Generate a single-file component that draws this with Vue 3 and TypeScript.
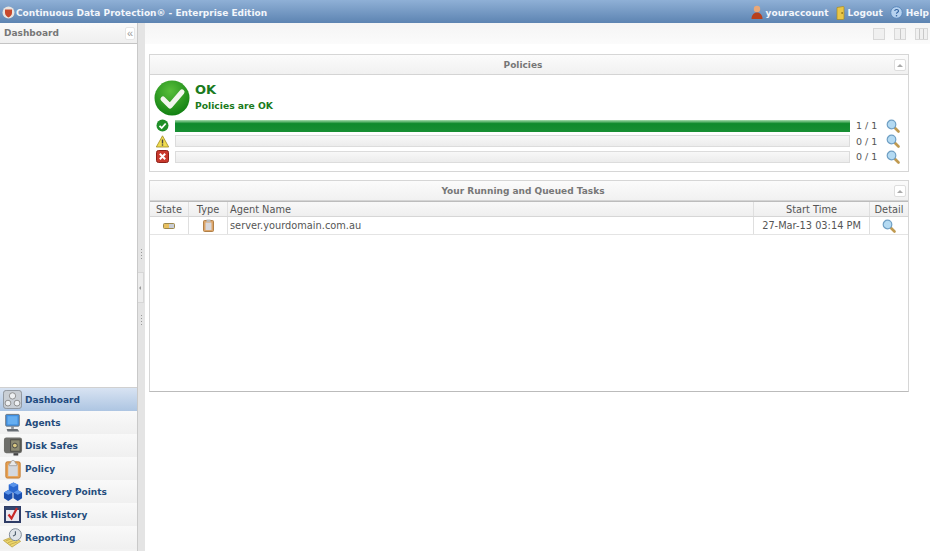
<script setup lang="ts">
interface NavItem {
  label: string
  icon: string
}

const navItems: NavItem[] = [
  { label: 'Dashboard', icon: 'dashboard' },
  { label: 'Agents', icon: 'agents' },
  { label: 'Disk Safes', icon: 'safe' },
  { label: 'Policy', icon: 'policy' },
  { label: 'Recovery Points', icon: 'recovery' },
  { label: 'Task History', icon: 'history' },
  { label: 'Reporting', icon: 'reporting' }
]

const policyRows = [
  { icon: 'ok', pct: 100, count: '1 / 1' },
  { icon: 'warn', pct: 0, count: '0 / 1' },
  { icon: 'err', pct: 0, count: '0 / 1' }
]
</script>

<template>
  <div class="page">
    <header class="topbar">
      <div class="brand">
        <svg class="brandIcon" width="13" height="13" viewBox="0 0 13 13">
          <circle cx="6.5" cy="6.5" r="6" fill="#e8e4e0" />
          <path d="M3 3.5h7V7c0 2-2 3.5-3.5 4.5C5 10.5 3 9 3 7z" fill="#c8482c" />
        </svg>
        Continuous Data Protection® - Enterprise Edition
      </div>
      <div class="userLinks">
        <span class="userLink">
          <svg width="12" height="15" viewBox="0 0 12 15">
            <circle cx="6" cy="4" r="3.2" fill="#eaa878" />
            <path d="M.5 14c0-4 2.5-6.5 5.5-6.5s5.500 2.500 5.500 6.500z" fill="#b8401c" />
          </svg>
          youraccount
        </span>
        <span class="userLink">
          <svg width="9" height="14" viewBox="0 0 9 14">
            <path d="M1 1.500L7 .5c1 0 1 .5 1 1v11c0 .5-.5 1-1 1H1z" fill="#e8c648" stroke="#a88a20" stroke-width=".7" />
            <rect x="5.5" y="6" width="1.2" height="2" fill="#8a6a10" />
          </svg>
          Logout
        </span>
        <span class="userLink">
          <svg width="13" height="13" viewBox="0 0 13 13">
            <circle cx="6.5" cy="6.5" r="5.8" fill="#b6d2f0" stroke="#5a88bc" />
            <path d="M4.7 5c.2-2 3.800-2 3.800 0 0 1.300-2 1.300-2 2.800" fill="none" stroke="#2f62a0" stroke-width="1.100" />
            <circle cx="6.5" cy="9.8" r=".8" fill="#2f62a0" />
          </svg>
          Help
        </span>
      </div>
    </header>

    <div class="body">
      <aside class="sidebar">
        <div class="sideHead">
          <span>Dashboard</span>
          <button class="collapse">«</button>
        </div>
        <div class="sideContent"></div>
        <nav class="nav">
          <a
            v-for="(item, i) in navItems"
            :key="item.label"
            class="navItem"
            :class="{ navActive: i === 0 }"
          >
            <span class="navIcon">
              <svg v-if="item.icon === 'dashboard'" width="19" height="19" viewBox="0 0 21 21">
                <rect x=".5" y=".5" width="20" height="20" rx="3" fill="#c9ced4" stroke="#8a8f96" />
                <circle cx="10.5" cy="6.5" r="3.5" fill="#eef0f2" stroke="#888" />
                <circle cx="5.5" cy="14.5" r="3.2" fill="#eef0f2" stroke="#888" />
                <circle cx="15.5" cy="14.5" r="3.2" fill="#eef0f2" stroke="#888" />
              </svg>
              <svg v-else-if="item.icon === 'agents'" width="19" height="20" viewBox="0 0 21 21">
                <rect x="3" y="1" width="15" height="13" rx="1" fill="#3f8fe0" stroke="#6a7078" />
                <rect x="5" y="3" width="11" height="9" fill="#66aef0" />
                <path d="M9 14h3v3H9z" fill="#8a9098" />
                <path d="M4 17h12l2 3H5z" fill="#676d74" />
              </svg>
              <svg v-else-if="item.icon === 'safe'" width="20" height="20" viewBox="0 0 21 21">
                <rect x="1" y="1.5" width="19" height="16.5" rx="2.5" fill="#6e6e6a" />
                <rect x="8" y="4" width="10" height="12" fill="#8c8a72" stroke="#4a4a44" />
                <circle cx="12.5" cy="10" r="2.5" fill="#d8c880" stroke="#444" />
                <rect x="11" y="18" width="5" height="2.5" fill="#444" />
              </svg>
              <svg v-else-if="item.icon === 'policy'" width="18" height="20" viewBox="0 0 18 21">
                <rect x="1.5" y="3" width="15" height="17" rx="1.5" fill="#e8a050" stroke="#c07a30" />
                <rect x="4" y="6" width="10" height="12" fill="#d4d8de" />
                <path d="M6.5 4.500c0-4 5-4 5 0H13V7H5V4.500z" fill="#e8e8e8" stroke="#999" stroke-width=".8" />
              </svg>
              <svg v-else-if="item.icon === 'recovery'" width="20" height="20" viewBox="0 0 21 21">
                <path d="M6 3l5-2.500L16 3v6l-5 2.500L6 9z" fill="#2a68d0" />
                <path d="M1 11l4.500-2.500L10 11v6l-4.500 3L1 17z" fill="#1c50b0" />
                <path d="M11 11l4.500-2.500L20 11v6l-4.500 3L11 17z" fill="#1c50b0" />
                <path d="M6 3l5 2.500L16 3 11 .5zM1 11l4.500 2.500L10 11 5.500 8.500zM11 11l4.500 2.500L20 11l-4.500-2.500z" fill="#5a94ea" />
              </svg>
              <svg v-else-if="item.icon === 'history'" width="17" height="17" viewBox="0 0 17 17">
                <rect x="1" y="1" width="15" height="15" fill="#e8e8f0" stroke="#2e3c66" stroke-width="2" />
                <path d="M1 1h15v3H1z" fill="#34466e" />
                <path d="M4.500 8.500l3 4L13 2" fill="none" stroke="#c82828" stroke-width="2.200" />
              </svg>
              <svg v-else width="20" height="20" viewBox="0 0 21 21">
                <path d="M.5 13l10-4 8 5-9 6z" fill="#ecd66e" stroke="#b89c3c" stroke-width=".8" />
                <path d="M3 13.500l8-3M5 15.500l8-3M7 17.500l8-3" stroke="#b89c3c" stroke-width=".7" />
                <circle cx="13" cy="7" r="6.3" fill="#dfe4ea" stroke="#7c8794" />
                <path d="M13 3.500V7l-2.500 1.500" fill="none" stroke="#456" stroke-width="1.100" />
              </svg>
            </span>
            {{ item.label }}
          </a>
        </nav>
      </aside>

      <div class="splitter">
        <span class="grip gripTop"></span>
        <span class="handle"><i></i></span>
        <span class="grip gripBottom"></span>
      </div>

      <main class="main">
        <div class="toolbar">
          <span class="layoutBtn"></span>
          <span class="layoutBtn cols2"><i></i></span>
          <span class="layoutBtn cols3"><i></i><i></i></span>
        </div>

        <section class="panel policiesPanel">
          <div class="panelHead">
            <span class="panelTitle">Policies</span>
            <button class="panelToggle"><i></i></button>
          </div>
          <div class="policies">
            <div class="status">
              <svg width="36" height="36" viewBox="0 0 36 36">
                <defs>
                  <radialGradient id="okBall" cx="45%" cy="30%" r="75%">
                    <stop offset="0" stop-color="#58bf3a" />
                    <stop offset="1" stop-color="#0d7c10" />
                  </radialGradient>
                </defs>
                <circle cx="18" cy="18" r="17.5" fill="url(#okBall)" />
                <path d="M9 19l7 7L28 12" fill="none" stroke="#f2f6ee" stroke-width="5" stroke-linecap="round" stroke-linejoin="round" />
              </svg>
              <div class="statusText">
                <div class="statusTitle">OK</div>
                <div class="statusSub">Policies are OK</div>
              </div>
            </div>
            <div v-for="row in policyRows" :key="row.icon" class="policyRow">
              <svg class="rowIcon" width="13" height="13" viewBox="0 0 13 13">
                <template v-if="row.icon === 'ok'">
                  <circle cx="6.5" cy="6.5" r="6" fill="#1f8f28" />
                  <path d="M3.5 6.8l2.2 2.2 4-4.500" fill="none" stroke="#fff" stroke-width="1.8" />
                </template>
                <template v-else-if="row.icon === 'warn'">
                  <path d="M6.5 .8L12.700 12H.3z" fill="#f0dc50" stroke="#a08a20" stroke-width=".8" />
                  <rect x="5.8" y="4.5" width="1.4" height="4" fill="#444" />
                  <rect x="5.8" y="9.3" width="1.4" height="1.4" fill="#444" />
                </template>
                <template v-else>
                  <rect x=".5" y=".5" width="12" height="12" rx="2" fill="#c8382c" stroke="#8c2018" />
                  <path d="M3.800 3.800l5.400 5.400M9.200 3.800l-5.400 5.400" stroke="#fff" stroke-width="2" />
                </template>
              </svg>
              <div class="bar">
                <div v-if="row.pct > 0" class="barFill" :style="{ width: row.pct + '%' }"></div>
              </div>
              <span class="count">{{ row.count }}</span>
              <svg class="lens" width="14" height="14" viewBox="0 0 14 14">
                <path d="M8.500 8.500l4 4" stroke="#c09a50" stroke-width="2.600" stroke-linecap="round" />
                <circle cx="5.5" cy="5.5" r="4.3" fill="#b4daf2" stroke="#6f9fc4" stroke-width="1.2" />
              </svg>
            </div>
          </div>
        </section>

        <section class="panel tasksPanel">
          <div class="panelHead">
            <span class="panelTitle">Your Running and Queued Tasks</span>
            <button class="panelToggle"><i></i></button>
          </div>
          <div class="tasks">
            <div class="taskRow taskHead">
              <span class="cState center">State</span>
              <span class="cType center">Type</span>
              <span class="cName">Agent Name</span>
              <span class="cTime center">Start Time</span>
              <span class="cDetail center">Detail</span>
            </div>
            <div class="taskRow">
              <span class="cState center">
                <svg width="12" height="6" viewBox="0 0 12 6">
                  <rect x=".5" y=".5" width="11" height="5" rx="1" fill="#e8c060" stroke="#9a8850" />
                  <rect x="6" y="1" width="5" height="4" fill="#c8ccd4" />
                </svg>
              </span>
              <span class="cType center">
                <svg width="11" height="13" viewBox="0 0 11 13">
                  <rect x=".5" y="1.5" width="10" height="11" rx="1" fill="#dca468" stroke="#b08048" />
                  <rect x="2.5" y="3.5" width="6" height="7.5" fill="#d8d8dc" />
                  <rect x="3.5" y=".5" width="4" height="2.5" fill="#bbb" />
                </svg>
              </span>
              <span class="cName">server.yourdomain.com.au</span>
              <span class="cTime center">27-Mar-13 03:14 PM</span>
              <span class="cDetail center">
                <svg width="14" height="14" viewBox="0 0 14 14">
                  <path d="M8.500 8.500l4 4" stroke="#c09a50" stroke-width="2.600" stroke-linecap="round" />
                  <circle cx="5.5" cy="5.5" r="4.3" fill="#b4daf2" stroke="#6f9fc4" stroke-width="1.2" />
                </svg>
              </span>
            </div>
          </div>
        </section>
      </main>
    </div>
  </div>
</template>

<style>
html,
body {
  margin: 0;
  background: #fff;
}
</style>

<style scoped>
.page {
  display: flex;
  flex-direction: column;
  width: 930px;
  height: 551px;
  overflow: hidden;
  font-family: "DejaVu Sans", Verdana, sans-serif;
  font-size: 10px;
  color: #333;
}

.topbar {
  display: flex;
  align-items: center;
  justify-content: space-between;
  flex: none;
  height: 23px;
  padding: 2px 1px 0 2px;
  box-sizing: border-box;
  background: linear-gradient(#8fb0d6, #5d84b2);
  color: #f2f6fb;
  font-weight: bold;
}

.brand {
  display: flex;
  align-items: center;
  gap: 1px;
  font-size: 9px;
}

.userLinks {
  display: flex;
  align-items: center;
  gap: 7px;
  font-size: 9px;
}

.userLink {
  display: flex;
  align-items: center;
  gap: 1px;
}

.userLink svg {
  margin-right: 2px;
}

.body {
  display: flex;
  flex: 1;
  min-height: 0;
}

.sidebar {
  display: flex;
  flex-direction: column;
  flex: none;
  width: 138px;
  box-sizing: border-box;
  border-right: 1px solid #c9c9c9;
}

.sideHead {
  display: flex;
  align-items: center;
  justify-content: space-between;
  flex: none;
  height: 20px;
  padding: 0 2px 0 4px;
  box-sizing: border-box;
  background: linear-gradient(#fafafa, #efefef);
  color: #777;
  font-weight: bold;
  font-size: 9px;
}

.collapse {
  width: 10px;
  height: 13px;
  padding: 0;
  border: 1px solid #e6e6e6;
  border-radius: 2px;
  background: #fff;
  color: #999;
  font-size: 11px;
  line-height: 9px;
}

.sideContent {
  flex: 1;
  border-top: 1px solid #c4c4c4;
  background: #fff;
}

.nav {
  display: flex;
  flex-direction: column;
  flex: none;
  height: 164px;
  padding-bottom: 2px;
  border-top: 1px solid #d0d0d0;
  box-sizing: border-box;
  background: #f2f2f2;
}

.navItem {
  display: flex;
  flex: none;
  height: 23px;
  align-items: center;
  gap: 2px;
  padding-left: 2px;
  background: linear-gradient(#f9f9f9, #f0f0f0);
  color: #244c7c;
  font-weight: bold;
  font-size: 9px;
}

.navActive {
  background: linear-gradient(#d8e3f2, #adc5e2);
  color: #1f4a7e;
}

.navIcon {
  display: flex;
  justify-content: center;
  flex: none;
  width: 21px;
}

.splitter {
  position: relative;
  flex: none;
  width: 7px;
  background: #e4e4e4;
}

.grip {
  position: absolute;
  left: 3px;
  width: 1px;
  height: 12px;
  background: repeating-linear-gradient(#999 0 1px, transparent 1px 3px);
}

.gripTop {
  top: 226px;
}

.gripBottom {
  top: 292px;
}

.handle {
  position: absolute;
  top: 249px;
  left: 0;
  width: 6px;
  height: 31px;
  border: 1px solid #d6d6d6;
  border-left: 0;
  background: #ececec;
  box-sizing: border-box;
}

.handle i {
  position: absolute;
  top: 13px;
  left: 1px;
  border: 2px solid transparent;
  border-right-color: #999;
  border-left: 0;
}

.main {
  display: flex;
  flex: 1;
  flex-direction: column;
  min-width: 0;
  background: #fff;
}

.toolbar {
  display: flex;
  align-items: center;
  justify-content: flex-end;
  gap: 9px;
  flex: none;
  height: 21px;
  padding-right: 2px;
  box-sizing: border-box;
  background: linear-gradient(#f5f5f5, #fbfbfb);
}

.layoutBtn {
  display: flex;
  justify-content: space-evenly;
  width: 12px;
  height: 12px;
  box-sizing: border-box;
  border: 1px solid #d8d8d8;
  background: #f0f0f0;
}

.cols3 {
  width: 13px;
}

.layoutBtn i {
  width: 1px;
  background: #c8c8c8;
}

.panel {
  display: flex;
  flex-direction: column;
  flex: none;
  width: 760px;
  margin-left: 4px;
  border: 1px solid #d6d6d6;
  box-sizing: border-box;
  background: #fff;
}

.policiesPanel {
  height: 118px;
  margin-top: 10px;
}

.tasksPanel {
  height: 212px;
  margin-top: 8px;
  border-bottom-color: #bbb;
}

.panelHead {
  position: relative;
  display: flex;
  align-items: center;
  justify-content: center;
  flex: none;
  height: 20px;
  padding-right: 12px;
  box-sizing: border-box;
  border-bottom: 1px solid #d4d4d4;
  background: linear-gradient(#fbfbfb, #f1f1f1);
}

.panelTitle {
  color: #777;
  font-weight: bold;
  font-size: 9px;
}

.panelToggle {
  position: absolute;
  top: 4px;
  right: 2px;
  width: 12px;
  height: 12px;
  padding: 0;
  border: 1px solid #dedede;
  border-radius: 2px;
  background: #fff;
}

.panelToggle i {
  display: block;
  width: 0;
  margin: 0 auto;
  border: 3px solid transparent;
  border-top: 0;
  border-bottom: 3px solid #aaa;
}

.policies {
  display: flex;
  flex-direction: column;
  padding: 5px 5px 0 4px;
}

.status {
  display: flex;
  gap: 4px;
  height: 38px;
  flex: none;
}

.statusText {
  padding-top: 1px;
  padding-left: 1px;
  color: #1a7a20;
  font-weight: bold;
}

.statusTitle {
  font-size: 13px;
  line-height: 17px;
}

.statusSub {
  font-size: 9.2px;
  line-height: 16px;
}

.policyRow {
  display: flex;
  align-items: center;
  height: 15.5px;
}

.rowIcon {
  flex: none;
  margin-left: 2px;
  margin-right: 6px;
}

.bar {
  flex: 1;
  height: 12px;
  border: 1px solid #dcdcdc;
  box-sizing: border-box;
  background: linear-gradient(#f8f8f8, #ececec);
}

.barFill {
  height: 12px;
  margin: -1px 0 -1px -1px;
  padding-right: 2px;
  box-sizing: content-box;
  background: linear-gradient(#a8dcae, #0f8a2c 30%, #188f34);
}

.count {
  flex: none;
  width: 36px;
  padding-left: 6px;
  box-sizing: border-box;
  color: #555;
  font-size: 9.5px;
}

.lens {
  flex: none;
  margin-right: 3px;
}

.tasks {
  display: flex;
  flex-direction: column;
}

.taskRow {
  display: flex;
  flex: none;
  height: 18px;
  border-bottom: 1px solid #e4e4e4;
  box-sizing: border-box;
  font-size: 9.8px;
  color: #555;
}

.taskHead {
  height: 16px;
  border-top: 1px solid #bcbcbc;
  border-bottom: 1px solid #d6d6d6;
  background: linear-gradient(#f8f8f8, #efefef);
  color: #555;
}

.taskRow > span {
  display: flex;
  align-items: center;
  box-sizing: border-box;
  border-right: 1px solid #dfdfdf;
  white-space: nowrap;
}

.center {
  justify-content: center;
}

.cState {
  width: 39px;
}

.cType {
  width: 39px;
}

.cName {
  flex: 1;
  padding-left: 2px;
}

.cTime {
  width: 116px;
}

.cDetail {
  width: 38px;
  border-right: 0 !important;
}
</style>
